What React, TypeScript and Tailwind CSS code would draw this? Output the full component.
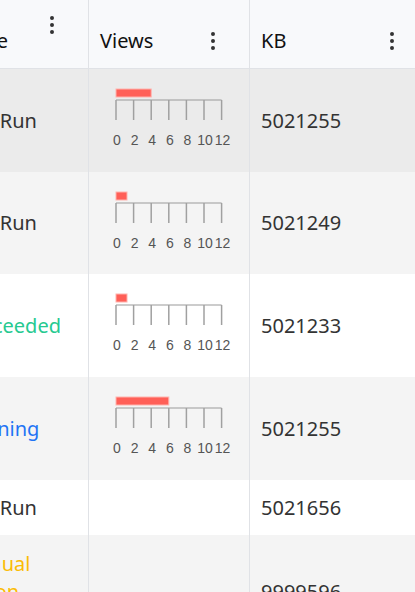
import React from 'react';
import { EllipsisVertical } from 'lucide-react';

type Row = { state: string; color: string; views: number | null; kb: string; bg: string; h: string };

const rows: Row[] = [
  { state: 'Not Run', color: 'text-[#333333]', views: 4, kb: '5021255', bg: 'bg-[#ebebeb]', h: 'h-[103px]' },
  { state: 'Not Run', color: 'text-[#333333]', views: 1.25, kb: '5021249', bg: 'bg-[#f4f4f4]', h: 'h-[102px]' },
  { state: 'Succeeded', color: 'text-[#26c990]', views: 1.25, kb: '5021233', bg: 'bg-white', h: 'h-[103px]' },
  { state: 'Running', color: 'text-[#1f74f5]', views: 6, kb: '5021255', bg: 'bg-[#f4f4f4]', h: 'h-[103px]' },
  { state: 'Not Run', color: 'text-[#333333]', views: null, kb: '5021656', bg: 'bg-white', h: 'h-[55px]' },
  { state: 'Manual Action Required', color: 'text-[#fbbc05]', views: null, kb: '9999596', bg: 'bg-[#f4f4f4]', h: 'h-[114px]' },
];

function Sparkbar({ value }: { value: number }) {
  const x0 = 10;
  const step = 8.8;
  const ticks = [0, 2, 4, 6, 8, 10, 12];
  return (
    <svg width="130" height="70" viewBox="0 0 130 70">
      <rect x={x0} y={5} width={value * step} height={8} fill="#ff5f57" stroke="#ffb3ae" strokeWidth="1" />
      <line x1={x0} y1={16} x2={x0 + 12 * step} y2={16} stroke="#9a9a9a" strokeWidth="1.2" />
      {ticks.map((t) => (
        <line key={t} x1={x0 + t * step} y1={16} x2={x0 + t * step} y2={36} stroke="#a0a0a0" strokeWidth="1.5" />
      ))}
      {ticks.map((t) => (
        <text
          key={'l' + t}
          x={x0 + t * step + 1}
          y={61}
          fontSize="14"
          fill="#555"
          textAnchor="middle"
          fontFamily="'Liberation Sans', Arial, sans-serif"
        >
          {t}
        </text>
      ))}
    </svg>
  );
}

export default function App() {
  return (
    <div className="w-[415px] h-[592px] overflow-hidden bg-white text-[20px] leading-[28px] [font-family:'Noto_Sans',sans-serif]">
      <div className="ml-[-52px] w-max flex flex-col">
        {/* header */}
        <div className="flex h-[69px] bg-[#f8f9fb] border-b border-[#e0e2e6] text-[#111]">
          <div className="w-[141px] border-r border-[#e0e2e6] flex justify-between pl-3 pr-6">
            <span className="pt-[27px]">State</span>
            <EllipsisVertical className="mt-[13px] text-[#333]" size={24} strokeWidth={2} />
          </div>
          <div className="w-[161px] border-r border-[#e0e2e6] flex justify-between pl-[11px] pr-6 pt-[27px]">
            <span className="self-start">Views</span>
            <EllipsisVertical className="self-start mt-[2px] text-[#333]" size={24} strokeWidth={2} />
          </div>
          <div className="w-[180px] flex justify-between pl-[11px] pr-[26px] pt-[27px]">
            <span className="self-start">KB</span>
            <EllipsisVertical className="self-start mt-[2px] text-[#333]" size={24} strokeWidth={2} />
          </div>
        </div>

        {rows.map((r, i) => (
          <div key={i} className={`flex ${r.bg} ${r.h}`}>
            <div className={`w-[141px] border-r border-[#e0e2e6] flex items-center pl-3 pr-4 ${r.color}`}>
              <span>{r.state}</span>
            </div>
            <div className="w-[161px] border-r border-[#e0e2e6] pl-[17px] pt-[15px]">
              {r.views !== null && <Sparkbar value={r.views} />}
            </div>
            <div className="w-[180px] flex items-center pl-[11px] text-[#333]">{r.kb}</div>
          </div>
        ))}
      </div>
    </div>
  );
}
